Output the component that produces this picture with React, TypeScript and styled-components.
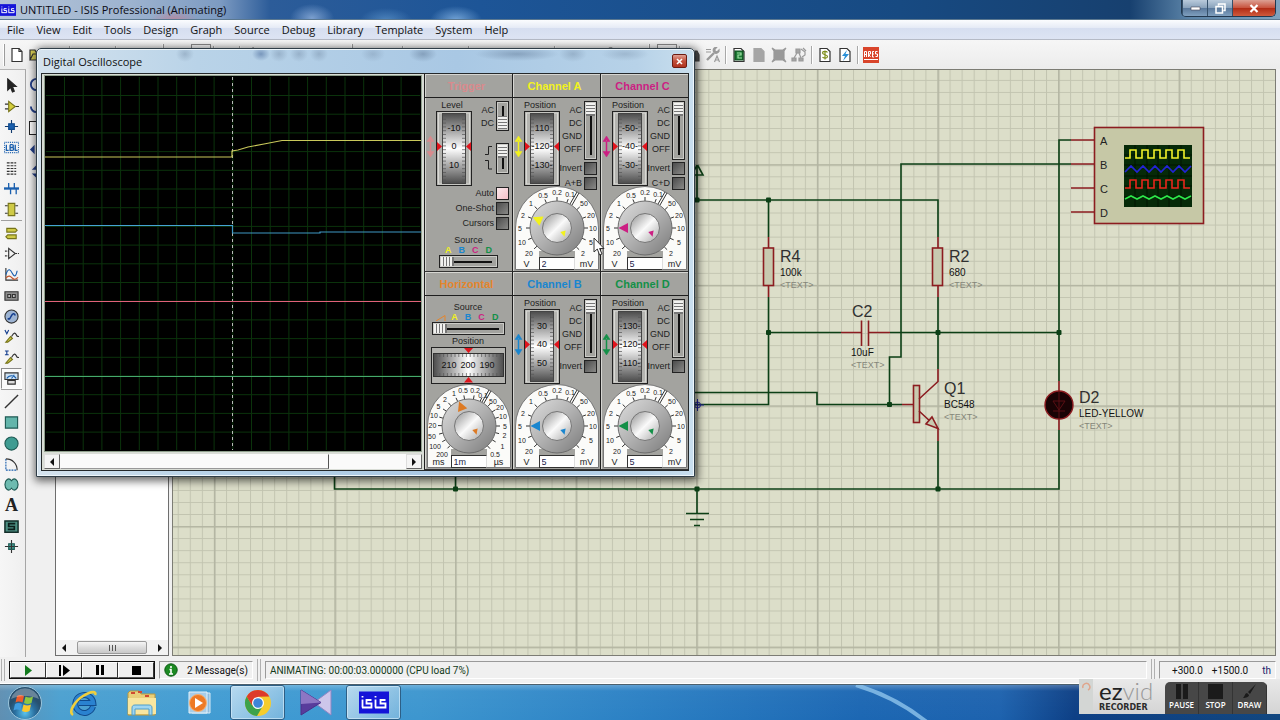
import React from "react";
import styled, { createGlobalStyle } from "styled-components";

const UI = '"Open Sans", "Noto Sans", sans-serif';
const SANS = '"Liberation Sans", Arial, sans-serif';

const GlobalStyle = createGlobalStyle`
  * { box-sizing: border-box; }
  body { margin: 0; background: #f0f0f0; font-family: ${UI}; font-size: 11px; color: #111; }
  button, input { font: inherit; color: inherit; margin: 0; }
  svg { display: block; }
`;

const Desktop = styled.div`
  position: relative;
  display: flex;
  flex-direction: column;
  min-height: 100vh;
  overflow: hidden;
`;

/* ---------- Main window chrome ---------- */
const TitleBar = styled.header`
  display: flex;
  align-items: center;
  gap: 4px;
  height: 20px;
  flex: none;
  color: #0b0b14;
  border-bottom: 1px solid #5b7890;
  background:
    radial-gradient(ellipse 22px 14px at 312px 18px, #8fb0dccc, transparent),
    radial-gradient(ellipse 24px 10px at 174px 20px, #c97a8caa, transparent),
    radial-gradient(ellipse 26px 12px at 386px 20px, #5f97cdaa, transparent),
    radial-gradient(ellipse 26px 14px at 456px 20px, #86b6e6cc, transparent),
    linear-gradient(90deg, #b5c5d8 0, #9db3cf 130px, #7d9bc2 220px, #2c5c99 270px, #1d5597 480px, #174a82 900px, #17406f 1130px, #5c84a8 1190px, #7fa3bf 100%);
`;
const TitleText = styled.h1`
  margin: 0;
  flex: 1;
  font-size: 11px;
  font-weight: 400;
  line-height: 20px;
`;
const WindowButtons = styled.div`
  display: flex;
  align-self: flex-start;
  margin-right: 4px;
  border: 1px solid #22384f;
  border-top: 0;
  border-radius: 0 0 5px 5px;
  overflow: hidden;
`;
const WindowButton = styled.button<{ $close?: boolean }>`
  display: grid;
  place-items: center;
  width: ${(p) => (p.$close ? 43 : 25)}px;
  height: 16px;
  padding: 0;
  border: 0;
  border-left: 1px solid #34506a;
  background: ${(p) =>
    p.$close
      ? "linear-gradient(#dca093, #c8543f 48%, #b02a14 50%, #cf5a3c)"
      : "linear-gradient(#b9cadb, #8aa3bc 48%, #58779a 50%, #7f9fbe)"};
`;
const MenuBar = styled.nav`
  display: flex;
  align-items: center;
  gap: 12px;
  height: 20px;
  flex: none;
  padding: 0 7px;
  background: linear-gradient(#fbfcfe, #e6ebf6 40%, #d6def0 45%, #dde4f3);
  border-bottom: 1px solid #b5bac6;
`;
const MenuItem = styled.button`
  padding: 0;
  border: 0;
  background: none;
  font-size: 11px;
  line-height: 18px;
`;
const ToolBar = styled.div`
  display: flex;
  align-items: center;
  height: 29px;
  flex: none;
  background: linear-gradient(#f6f6f6, #ececec);
`;
const ToolGroup = styled.div<{ $basis?: number }>`
  display: flex;
  align-items: center;
  flex: 0 0 ${(p) => (p.$basis ? p.$basis + "px" : "auto")};
`;
const ToolButton = styled.button<{ $pressed?: boolean }>`
  display: grid;
  place-items: center;
  width: 20px;
  height: 22px;
  padding: 0;
  border: 1px solid ${(p) => (p.$pressed ? "#8a8a8a" : "transparent")};
  background: ${(p) => (p.$pressed ? "#f8f8f8" : "none")};
`;
const Separator = styled.span`
  width: 6px;
  height: 18px;
  background: linear-gradient(90deg, transparent 2px, #a8a8a8 2px, #a8a8a8 3px, #fff 3px, #fff 4px, transparent 4px);
`;
const Grip = styled.span<{ $wide?: boolean }>`
  width: ${(p) => (p.$wide ? 12 : 7)}px;
  height: 22px;
  background: linear-gradient(90deg, transparent 3px, #fff 3px, #fff 4px, #9c9c9c 4px, #9c9c9c 5px, transparent 5px);
`;

/* ---------- Work area ---------- */
const Work = styled.main`
  display: flex;
  flex: 1;
  min-height: 588px;
`;
const ModeBar = styled.div`
  width: 26px;
  flex: none;
  border-right: 1px solid #a6a6a6;
  padding: 5px 3px 0 1px;
  background: linear-gradient(90deg, #f6f6f6, #efefef);
  border-top: 1px solid #b4b4b4;
`;
const ModeList = styled.div`
  display: flex;
  flex-direction: column;
  height: 482px;
`;
const ModeButton = styled.button<{ $active?: boolean }>`
  display: grid;
  place-items: center;
  flex: 1;
  min-height: 0;
  padding: 0;
  border: 1px solid;
  border-color: ${(p) => (p.$active ? "#8c8c8c #fff #fff #8c8c8c" : "transparent")};
  background: ${(p) => (p.$active ? "#fbfbfb" : "none")};
`;
const ModeRule = styled.span`
  height: 3px;
  border-top: 1px solid #a0a0a0;
`;
const RotateBar = styled.div`
  display: flex;
  flex-direction: column;
  gap: 7px;
  align-items: flex-start;
  width: 29px;
  flex: none;
  padding: 8px 3px;
`;
const AngleInput = styled.input`
  width: 24px;
  height: 14px;
  padding: 0 2px;
  border: 1px solid #222;
  font-size: 9px;
`;
const Picker = styled.aside`
  display: flex;
  flex-direction: column;
  justify-content: flex-end;
  width: 114px;
  flex: none;
  margin: 0 3px 1px 0;
  border: 1px solid #6e6e6e;
  background: #fff;
`;
const PickerScroll = styled.div`
  display: flex;
  justify-content: space-between;
  align-items: center;
  height: 15px;
  background: #f2f2f2;
`;
const ScrollArrow = styled.button<{ $raised?: boolean }>`
  display: grid;
  place-items: center;
  width: 16px;
  height: 15px;
  padding: 0;
  border: ${(p) => (p.$raised ? "1px solid" : "0")};
  border-color: #ddd #666 #666 #ddd;
  background: ${(p) => (p.$raised ? "#f4f4f4" : "none")};
`;
const PickerThumb = styled.div`
  display: grid;
  place-items: center;
  flex: 0 0 70px;
  height: 13px;
  border: 1px solid #9a9a9a;
  border-radius: 2px;
  background: linear-gradient(#f5f5f5, #dcdcdc 50%, #c9c9c9);
`;
const Canvas = styled.section`
  flex: 1;
  min-width: 0;
  margin: 0 4px 1px 0;
  border: 1px solid #7c7c74;
  background: #dcdec9;
  overflow: hidden;
  font-family: ${SANS};
`;

/* ---------- Status bar ---------- */
const StatusBar = styled.footer`
  display: flex;
  align-items: center;
  height: 27px;
  flex: none;
  gap: 4px;
  padding: 0 4px 0 1px;
  background: #f0f0f0;
  border-bottom: 1px solid #fff;
  font-family: Roboto, sans-serif;
  font-size: 10px;
`;
const SimControls = styled.div`
  display: flex;
  border: 1px solid #111;
`;
const SimButton = styled.button`
  display: grid;
  place-items: center;
  width: 36px;
  height: 16px;
  padding: 0;
  border: 1px solid;
  border-color: #fff #333 #555 #fff;
  background: #efefef;
`;
const StatusCell = styled.div<{ $grow?: boolean; $width?: number; $color?: string }>`
  display: flex;
  align-items: center;
  gap: 9px;
  flex: ${(p) => (p.$grow ? "1" : "0 0 " + p.$width + "px")};
  height: 18px;
  padding: 0 4px;
  white-space: nowrap;
  color: ${(p) => p.$color ?? "#111"};
  border: 1px solid;
  border-color: #9a9a9a #fff #fff #9a9a9a;
`;
const StatusGrip = styled.span`
  width: 4px;
  height: 22px;
  border: 1px solid #b0b0b0;
  border-width: 0 1px;
`;
const CoordText = styled.span`
  padding-left: 8px;
`;
const UnitText = styled.span`
  margin-left: auto;
  color: #1b1b6a;
`;

/* ---------- Taskbar ---------- */
const TaskBar = styled.nav`
  display: flex;
  align-items: center;
  height: 36px;
  flex: none;
  border-top: 1px solid #4c5f6c;
  background:
    linear-gradient(#ffffff40, #ffffff08 6px, transparent),
    linear-gradient(90deg, #5f8fb2 0, #4ba0d0 60px, #3f9bd3 250px, #3d96cf 420px, #2b80c4 640px, #1c67b3 860px, #1d62ae 1000px, #0d3f85 1075px, #11467f 100%);
`;
const TaskButton = styled.button<{ $active?: boolean; $width?: number }>`
  display: grid;
  place-items: center;
  width: ${(p) => p.$width ?? 55}px;
  height: 35px;
  margin-right: ${(p) => (p.$width ? 6 : 3)}px;
  padding: 0;
  border: 1px solid ${(p) => (p.$active ? "#2d5f86" : "transparent")};
  border-radius: 3px;
  background: ${(p) => (p.$active ? "linear-gradient(135deg, #d3e8f6cc, #8cc0e2aa)" : "none")};
  box-shadow: ${(p) => (p.$active ? "inset 0 0 0 1px #d5ebf9aa" : "none")};
`;

/* ---------- Oscilloscope window ---------- */
const ScopeWindow = styled.section`
  position: absolute;
  left: 36px;
  top: 48px;
  width: 659px;
  padding: 0 5px 5px 4px;
  border: 1px solid #2f3d47;
  border-radius: 5px 5px 0 0;
  background:
    radial-gradient(ellipse 9px 8px at 148px 5px, #6f86a066, transparent),
    radial-gradient(ellipse 9px 7px at 224px 5px, #33558a77, transparent),
    radial-gradient(ellipse 9px 8px at 242px 5px, #6f86a066, transparent),
    radial-gradient(ellipse 9px 8px at 262px 5px, #6f86a066, transparent),
    radial-gradient(ellipse 9px 8px at 282px 5px, #6f86a066, transparent),
    radial-gradient(ellipse 12px 8px at 336px 5px, #6f86a055, transparent),
    radial-gradient(ellipse 14px 8px at 386px 5px, #5a728f77, transparent),
    radial-gradient(ellipse 42px 7px at 480px 5px, #4f668466, transparent),
    radial-gradient(ellipse 14px 8px at 536px 5px, #6f86a066, transparent),
    radial-gradient(ellipse 24px 7px at 588px 5px, #6f86a055, transparent),
    linear-gradient(90deg, #d5e3ee 0, #b9d3e8 160px, #a9c8e4 420px, #b7d2e8 600px, #c9dfee 100%);
  box-shadow: inset 0 0 0 1px #eef6fb, 1px 2px 9px 2px #00000099;
  font-family: ${SANS};
`;
const ScopeTitle = styled.div`
  display: flex;
  justify-content: space-between;
  align-items: center;
  height: 24px;
  padding: 0 2px;
  font-family: ${UI};
`;
const ScopeHeading = styled.h2`
  margin: 0;
  font-size: 11px;
  font-weight: 400;
`;
const ScopeClose = styled.button`
  display: grid;
  place-items: center;
  width: 15px;
  height: 14px;
  padding: 0;
  border: 1px solid #6d1c12;
  border-radius: 2px;
  background: linear-gradient(#e0a194, #c24f3b 50%, #b03421);
`;
const ScopeBody = styled.div`
  display: grid;
  grid-template-columns: 382px 264px;
  border: 1px solid #24282a;
  background: #a3a39f;
`;
const ScreenColumn = styled.div`
  display: flex;
  flex-direction: column;
  padding: 1px 2px;
  gap: 2px;
  background: #d9ddd6;
`;
const ScreenScroll = styled.div`
  display: flex;
  justify-content: space-between;
  height: 15px;
  background: #fafafa;
`;
const ScreenThumb = styled.span`
  flex: 0 0 269px;
  margin-right: auto;
  border: 1px solid;
  border-color: #fafafa #555 #999 #fafafa;
`;
const Panels = styled.div`
  display: grid;
  grid-template-columns: repeat(3, 88px);
  grid-auto-rows: 198px;
`;
const Panel = styled.section`
  border-left: 1px solid #1e1e1e;
  border-bottom: 1px solid #333;
  box-shadow: inset 1px 1px 0 #d6d6d2;
`;
const PanelHeading = styled.h3<{ $color: string }>`
  margin: 0;
  height: 24px;
  padding-right: 4px;
  border-bottom: 1px solid #1e1e1e;
  color: ${(p) => p.$color};
  font-size: 11px;
  font-weight: 700;
  line-height: 24px;
  text-align: center;
`;
const PanelTop = styled.div`
  display: flex;
  height: 88px;
  font-size: 9px;
`;
const GaugeColumn = styled.div`
  width: 46px;
  flex: none;
  padding-top: 1px;
`;
const Caption = styled.div<{ $inset?: boolean }>`
  padding-left: ${(p) => (p.$inset ? 8 : 0)}px;
  color: #222;
  font-size: 9px;
  line-height: 12px;
  text-align: center;
`;
const SwitchColumn = styled.div<{ $gap: number }>`
  display: flex;
  flex-direction: column;
  align-items: flex-end;
  gap: ${(p) => p.$gap}px;
  flex: 1;
  min-width: 0;
  padding: 3px 3px 0 0;
`;
const SwitchRow = styled.label`
  display: flex;
  gap: 2px;
  color: #222;
`;
const SwitchNames = styled.span`
  display: block;
  padding-top: 3px;
  line-height: 13px;
  text-align: right;
`;
const Slider = styled.input<{ $vertical?: boolean; $long: number }>`
  appearance: none;
  flex: none;
  writing-mode: ${(p) => (p.$vertical ? "vertical-lr" : "horizontal-tb")};
  width: ${(p) => (p.$vertical ? 13 : p.$long)}px;
  height: ${(p) => (p.$vertical ? p.$long : 13)}px;
  border: 1px solid #222;
  outline: 1px solid #ccccc8;
  outline-offset: -2px;
  background: linear-gradient(#111, #111) center / ${(p) => (p.$vertical ? "2px calc(100% - 8px)" : "calc(100% - 10px) 2px")} no-repeat #a3a39f;
  &::-webkit-slider-thumb {
    appearance: none;
    width: ${(p) => (p.$vertical ? 11 : 14)}px;
    height: ${(p) => (p.$vertical ? 14 : 11)}px;
    border: 1px solid #777;
    background: repeating-linear-gradient(${(p) => (p.$vertical ? "180deg" : "90deg")}, #f2f2f0 0, #f2f2f0 2px, #777 2px, #777 3px);
  }
`;
const CheckLabel = styled.label`
  display: flex;
  align-items: center;
  justify-content: flex-end;
  gap: 2px;
  color: #222;
  font-size: 9px;
  line-height: 13px;
  white-space: nowrap;
`;
const CheckBox = styled.input`
  appearance: none;
  width: 13px;
  height: 13px;
  border: 1px solid #222;
  background: linear-gradient(135deg, #4c4c4c, #8a8a88);
  &:checked { background: linear-gradient(135deg, #fbe9ec, #f5c0c8); }
`;
const CheckStack = styled.div`
  display: flex;
  flex-direction: column;
  gap: 2px;
`;
const TriggerChecks = styled(CheckStack)`
  padding: 1px 3px 4px 0;
`;
const SourceBlock = styled.div`
  display: flex;
  flex-direction: column;
  align-items: center;
  font-size: 9px;
`;
const SourceLetters = styled.div<{ $width: number }>`
  display: flex;
  width: ${(p) => p.$width}px;
  line-height: 9px;
  font-weight: 700;
`;
const SourceLetter = styled.span<{ $color: string }>`
  flex: 1;
  display: grid;
  justify-items: center;
  align-items: center;
  color: ${(p) => p.$color};
`;
const DialBox = styled.div`
  display: grid;
  justify-content: center;
`;
const DialLayer = styled.div`
  grid-area: 1 / 1;
`;
const Readout = styled.label`
  grid-area: 1 / 1;
  align-self: end;
  display: flex;
  justify-content: center;
  align-items: center;
  height: 13px;
  font-size: 9px;
  color: #222;
`;
const Unit = styled.span`
  width: 24px;
  text-align: center;
`;
const ReadoutInput = styled.input`
  width: 36px;
  height: 13px;
  padding: 0 2px;
  border: 1px solid #333;
  border-right-color: #ddd;
  background: #fff;
  color: #25254a;
  font-size: 9px;
`;
const HorizontalTop = styled.div`
  display: flex;
  flex-direction: column;
  align-items: center;
  height: 88px;
  padding: 5px 1px 0 0;
`;

/* ---------- Floating recorder ---------- */
const Recorder = styled.aside`
  position: absolute;
  right: 0;
  bottom: 6px;
  display: flex;
  align-items: flex-end;
  width: 201px;
  height: 35px;
  padding: 0 13px 0 0;
  border-radius: 5px 0 0 5px;
  background: linear-gradient(#e9e9e9, #d4d4d4);
`;
const RecorderHandle = styled.span`
  align-self: stretch;
  width: 14px;
  padding: 3px 2px;
  background: #d3d6d4;
`;
const Brand = styled.div`
  flex: 1;
  padding-left: 6px;
  font-family: Lato, sans-serif;
  color: #2c2c2c;
`;
const BrandName = styled.div`
  font-size: 24px;
  line-height: 22px;
  color: #999;
  font-weight: 300;
`;
const BrandStrong = styled.span`
  color: #222;
  font-weight: 400;
`;
const BrandSub = styled.div`
  font-family: "DejaVu Sans", sans-serif;
  font-size: 8px;
  font-weight: 700;
  line-height: 12px;
`;
const RecorderButtons = styled.div`
  display: flex;
  height: 32px;
  border-radius: 5px 5px 0 0;
  background: #474747;
  overflow: hidden;
`;
const RecorderButton = styled.button`
  display: flex;
  flex-direction: column;
  align-items: center;
  gap: 0;
  width: 34px;
  padding: 2px 0 0;
  border: 0;
  border-right: 1px solid #343434;
  background: none;
  color: #fff;
  font-size: 8px;
  font-weight: 600;
  line-height: 12px;
`;
const Pointer = styled.svg`
  position: absolute;
  left: 593px;
  top: 237px;
`;

/* ---------- Icons ---------- */
const Svg = ({ s = 16, children }: { s?: number; children: React.ReactNode }) => (
  <svg width={s} height={s} viewBox="0 0 16 16" fill="none" stroke="#333" strokeWidth="1.2" aria-hidden="true">
    {children}
  </svg>
);

const PAGE = "M3 1.5h7l3 3v10H3z";

const toolIcons: Record<string, React.ReactNode> = {
  new: <><path d={PAGE} fill="#fff" /><path d="M10 1.5v3h3" /></>,
  open: <path d="M1 13V3h5l1 2h6v2M1 13l3-6h11l-3 6z" fill="#d8cf55" />,
  save: <path d="M2 2h12v12H2zM5 2v5h6V2M5 14v-4h6v4" />,
  print: <path d="M4 6V2h8v4M2 6h12v6H2zM5 10h6v4H5z" />,
  copy: <path d="M2 2h8v9H2zM6 5h8v9H6z" fill="#eee" />,
  grid: <path d="M2 2h12v12H2zM6 2v12M10 2v12M2 6h12M2 10h12" />,
  cross: <path d="M8 1v14M1 8h14" />,
  move: <path d="M8 1l3 3H5zM8 15l3-3H5zM1 8l3-3v6zM15 8l-3-3v6z" fill="#24408a" />,
  zoom: <path d="M7 2a5 5 0 1 0 .1 0M10.500 10.500L15 15" />,
  undo: <path d="M2 7c3-5 9-5 12 0M2 3v4h4" stroke="#888" />,
  cut: <path d="M4 2l8 12M12 2L4 14" />,
  block: <path d="M2 3h12v4H2zM2 9h12v4H2z" fill="#777" />,
  binoculars: <path d="M2 14V8l2-4h2v3h4V4h2l2 4v6h-4v-4H6v4z" fill="#555" stroke="#444" />,
  wrench: (
    <g stroke="#9a9a9a">
      <path d="M1 2.500h5M1 5h5" />
      <path d="M2 13l7-7" strokeWidth="2.400" />
      <path d="M14 3l-2 2-2-1 0-2 1.500-1.500c-2-.5-4 1.500-3 4s4 2.500 5.500 0z" fill="#9a9a9a" />
      <path d="M9.500 15l2.500-6 2.500 6M10.500 13h3" />
    </g>
  ),
  sheetGreen: (
    <>
      <path d={PAGE} fill="#fff" />
      <path d="M4 4h8v9H4z" fill="#1d7a35" stroke="#0d4d1d" />
      <path d="M6 6h4v2H7v3h4" stroke="#9fe2a5" />
    </>
  ),
  sheetGrey: <path d={PAGE} fill="#a5a5a5" stroke="#a5a5a5" />,
  boxGrey: <path d="M1 1l3 2h8l3-2-2 3v8l2 3-3-2H4l-3 2 2-3V4z" fill="#999" stroke="#999" />,
  treeGrey: (
    <>
      <path d="M5 2h4v4H5zM1 11h4v3H1zM8 11h4v3H8z" fill="#a5a5a5" stroke="#999" />
      <path d="M6 6l-3 5M8 6l2 5M10 2l4 3v3l-3 2M12 1l3 3" stroke="#999" />
    </>
  ),
  bill: (
    <>
      <path d={PAGE} fill="#fff" />
      <path d="M10.500 5.500c-1-1.500-5-1.500-5 .5s5 1.500 5 3.500-4 2-5 .5M8 3.500v9" stroke="#7f8f1c" />
    </>
  ),
  bolt: (
    <>
      <path d={PAGE} fill="#fff" />
      <path d="M10 3L5 9h3l-2 5 6-7H8.500z" fill="#2a90d8" stroke="none" />
    </>
  ),
};

const A = "#1a5fae";
const TEAL = "#3f9c92";

const TextModeGlyph = styled.span`
  font-family: "Liberation Serif", serif;
  font-size: 18px;
  font-weight: 700;
  line-height: 18px;
  color: #222;
`;

const modeIcons: { label: string; icon?: React.ReactNode; glyph?: string; active?: boolean; rule?: boolean }[] = [
  { label: "Selection", icon: <path d="M4 1v12l3-3 2 5 2-1-2-5h4z" fill="#222" stroke="#222" /> },
  { label: "Component", icon: <><path d="M1 5.500h4M1 10.500h4M12 8h4" /><path d="M5 2.500v11L12 8z" fill="#d5cf3c" stroke="#77741a" /></> },
  { label: "Junction", icon: <><path d="M8 1v14M1 8h14" stroke="#123c6e" /><path d="M5 5h6v6H5z" fill={A} stroke="#0f4a8c" /></> },
  { label: "Wire label", icon: <><path d="M.5 2.500h15v11H.5z" strokeDasharray="1 1" stroke={A} /><path d="M2.500 5v6h2.500M6.500 5v6h2.300a1.500 1.500 0 0 0 0-3H6.500M6.500 8h2a1.500 1.500 0 0 0 0-3h-2M12 5v6h2.500" stroke={A} strokeWidth="1.400" /></> },
  { label: "Script", icon: <path d="M3 2h10M3 5h10M3 8h10M3 11h10M3 14h10" strokeDasharray="3 1" /> },
  { label: "Bus", icon: <><path d="M0 8h16" stroke={A} strokeWidth="2.500" /><path d="M5 2v6M11 2v6M7 8v6M13 8v6" stroke={A} strokeWidth="1.400" /></> },
  { label: "Subcircuit", icon: <><path d="M1 4h3M1 12h3M12 4h3M12 12h3" /><path d="M4.500 1.500h7v13h-7z" fill="#cfca46" stroke="#77741a" /></>, rule: true },
  { label: "Terminal", icon: <g fill="#cfca46" stroke="#77741a"><path d="M3 2.500h9l2 2-2 2H3zM13 9.500H4l-2 2 2 2h9z" /></g> },
  { label: "Device pin", icon: <><path d="M1 5.500h4M1 10.500h4M12 8h4" strokeDasharray="2 1" /><path d="M5 2.500v11L12 8z" /></> },
  { label: "Graph", icon: <><path d="M2 1v13h13" /><path d="M2 8c3-8 5-5 7-1s4 3 5-3" stroke={A} /><path d="M2 12c3-4 5-2 7 0s4 1 6-1" stroke="#c4572c" /></> },
  { label: "Tape", icon: <><path d="M1 4h14v9H1z" fill="#8e8e8e" /><path d="M4 7h3v3H4zM9 7h3v3H9z" fill="#eee" /></> },
  { label: "Generator", icon: <><circle cx="8" cy="8" r="7" fill="#9db4d3" /><path d="M4 10c2 2 3-1 4-3s3-3 4 0" stroke="#123c8e" strokeWidth="1.600" /></> },
  { label: "Voltage probe", icon: <><path d="M1 1l2 4 2-4" stroke="#123c8e" /><path d="M2 14l5-6 2 2-5 4z" fill="#cfca46" stroke="#77741a" /><path d="M8 8c3-5 4-4 5-2s1 2 3 2" /></> },
  { label: "Current probe", icon: <><path d="M1 1h4M3 1v4M1 5h4" stroke="#123c8e" /><path d="M2 14l5-6 2 2-5 4z" fill="#cfca46" stroke="#77741a" /><path d="M8 8c3-5 4-4 5-2s1 2 3 2" /></> },
  { label: "Instrument", active: true, rule: true, icon: <><path d="M1 2h14v7H1z" fill="#cfe2f2" /><path d="M3 8c2-4 8-4 10 0M8 8l3-4" stroke={A} /><path d="M4 10h8v4H4z" fill="#ddd" /></> },
  { label: "Line", icon: <path d="M1 15L15 1" strokeWidth="1.500" /> },
  { label: "Box", icon: <path d="M1.500 2h13v12h-13z" fill="#63b5ab" stroke="#1f5a54" /> },
  { label: "Circle", icon: <circle cx="8" cy="8" r="7" fill={TEAL} stroke="#1f5a54" /> },
  { label: "Arc", icon: <><path d="M2 2v12h12" strokeDasharray="2 1" stroke={A} /><path d="M2 2c7 0 12 5 12 12" /></> },
  { label: "Path", icon: <path d="M8 4c3-4 7-1 7 4s-4 8-7 4c-3 4-7 1-7-4s4-8 7-4z" fill="#6dbbb0" stroke="#1f5a54" /> },
  { label: "Text", glyph: "A" },
  { label: "Symbol", icon: <><path d="M1 2h14v12H1z" fill="#4b8d80" stroke="#132d29" strokeWidth="1.600" /><path d="M12 5H5v3h6v3H4" stroke="#0c1f1c" strokeWidth="1.800" /></> },
  { label: "Marker", icon: <><path d="M8 1v14M1 8h14" /><path d="M5 5h6v6H5z" stroke="#1f5a54" fill={TEAL} /><path d="M8 5v6M5 8h6" /></> },
];

const Arrow = ({ right }: { right?: boolean }) => (
  <svg width="6" height="8" aria-hidden="true">
    <path d={right ? "M1 0v8l4-4z" : "M5 0v8L1 4z"} fill="#111" />
  </svg>
);

const IsisLogo = ({ w, h }: { w: number; h: number }) => (
  <svg width={w} height={h} viewBox="0 0 30 22" aria-label="ISIS">
    <path d="M0 0h30v22H0z" fill="#1414d8" />
    <path d="M3.500 8v8M12.500 8.500H7.500v3.500h5v4H3M16.500 8v8M26.500 8.500h-5v3.500h5v4H16M3.500 4.500v1.500M16.500 4.500v1.500" stroke="#fff" strokeWidth="1.800" fill="none" />
  </svg>
);

/* ---------- Schematic ---------- */
const WIRE = "#0c4016";
const PART = "#8c1c20";

const PartText = ({ x, y, name, value }: { x: number; y: number; name: string; value: string }) => (
  <g>
    <text x={x} y={y} fontSize="16" fill="#303030">{name}</text>
    <text x={x} y={y + 14} fontSize="10" fill="#111">{value}</text>
    <text x={x} y={y + 26} fontSize="9" fill="#85867a">&lt;TEXT&gt;</text>
  </g>
);

const square = (y: number) =>
  `M1125 ${y}h5v-8h6v8h6v-8h6v8h6v-8h6v8h6v-8h6v8h6v-8h6v8h6`;
const zigzag = (y: number, a: number) =>
  "M1125 " + y + Array.from({ length: 11 }, (_, i) => `l6 ${i % 2 ? a : -a}`).join("");

const Schematic = () => (
  <svg width="100%" height="100%" role="img" aria-label="Transistor amplifier schematic">
    <defs>
      <pattern id="minor" x="334.500" y="164.300" width="12.060" height="12.060" patternUnits="userSpaceOnUse">
        <path d="M.5 0v13M0 .5h13" stroke="#c2c4b0" />
      </pattern>
      <pattern id="major" x="334.500" y="164.300" width="120.600" height="120.600" patternUnits="userSpaceOnUse">
        <path d="M.8 0v121M0 .8h121" stroke="#b3b5a2" strokeWidth="1.600" />
      </pattern>
    </defs>
    <g transform="translate(-173 -70)">
      <rect x="173" y="70" width="4000" height="3000" fill="url(#minor)" />
      <rect x="173" y="70" width="4000" height="3000" fill="url(#major)" />
      <g fill="none" stroke={WIRE} strokeWidth="1.600">
        <path d="M697 200H938V237M768.500 200V237M768.500 297V404.500H690M690 392.500H817V404.500H902" />
        <path d="M889.500 404.500V357H901V164H1071M1071 140H1059V381M1059 430V489H334.500V470" />
        <path d="M768.500 332.500H841M890 332.500H1059M938 297V369M938 441V489M455.500 470V489" />
        <path d="M697 489V513M686 513.500H709M690 519.500H704M694 525.500H700" />
        <path d="M697 200V165L692 175H703L697.500 165" />
      </g>
      <g fill={WIRE}>
        {[[697, 200], [768.5, 200], [768.5, 332.5], [938, 332.5], [1059, 332.5], [889.5, 404.5], [938, 489], [697, 489], [455.5, 489]].map(([x, y]) => (
          <rect key={x + "-" + y} x={x - 2.5} y={y - 2.5} width="5" height="5" rx="1" />
        ))}
      </g>
      <g fill="none" stroke="#23239a"><circle cx="697.500" cy="405" r="3" /><path d="M697.500 399v12M691 405h13" /></g>
      <g fill="none" stroke={PART} strokeWidth="1.600">
        <path d="M768.500 237V248M768.500 285V297M938 237V248M938 285V297" />
        <rect x="763.500" y="248" width="10" height="37.500" fill="#c8cab0" />
        <rect x="932.500" y="248" width="10" height="37.500" fill="#c8cab0" />
        <path d="M841 332.500H861M869 332.500H890M861.500 320.500V346M868.500 320.500V346" />
        <rect x="913.500" y="385.500" width="6" height="37" fill="#c8cab0" />
        <path d="M902 404.500H913M919 399L938 381.500V369M919 411L938 428.500V441" />
        <path d="M938 428.500L926 424L932 417Z" fill="#c8cab0" />
        <path d="M1059 381V430" />
        <circle cx="1059" cy="405" r="14" fill="#190305" strokeWidth="1.400" />
        <path d="M1059 391V419M1053 401H1065L1059 410ZM1053 411H1065" stroke="#5a0f14" strokeWidth="1" />
        <rect x="1094.500" y="127.500" width="109" height="96" fill="#c6c8a6" />
        <path d="M1071 140H1094M1071 164H1094M1071 188H1094M1071 212H1094" />
      </g>
      <rect x="1124" y="145" width="68" height="62" fill="#062a08" />
      <path d="M1124 155H1192M1124 165H1192M1124 176H1192M1124 186H1192M1124 197H1192M1135 145V207M1147 145V207M1158 145V207M1169 145V207M1181 145V207" stroke="#001500" />
      <g fill="none" strokeWidth="1.600">
        <path d={square(158)} stroke="#f2f22a" />
        <path d={zigzag(172, 6)} stroke="#2323d8" />
        <path d={square(188)} stroke="#e8261c" />
        <path d={zigzag(199, 3)} stroke="#2ee84a" />
      </g>
      <g fontSize="11" fill="#222">
        {["A", "B", "C", "D"].map((l, i) => <text key={l} x="1100" y={145 + i * 24}>{l}</text>)}
      </g>
      <PartText x={780} y={262} name="R4" value="100k" />
      <PartText x={949} y={262} name="R2" value="680" />
      <g>
        <text x="852" y="317" fontSize="16" fill="#303030">C2</text>
        <text x="851" y="356" fontSize="10" fill="#111">10uF</text>
        <text x="851" y="368" fontSize="9" fill="#85867a">&lt;TEXT&gt;</text>
      </g>
      <PartText x={944} y={394} name="Q1" value="BC548" />
      <PartText x={1079} y={403} name="D2" value="LED-YELLOW" />
    </g>
  </svg>
);

/* ---------- Oscilloscope parts ---------- */
const lines = (n: number, f: (i: number) => string) => Array.from({ length: n }, (_, i) => f(i)).join("");

const ScopeScreen = () => (
  <svg width="378" height="377" role="img" aria-label="Oscilloscope traces">
    <rect width="378" height="377" fill="#000" stroke="#8fa08d" strokeWidth="2" />
    <path
      d={lines(19, (i) => `M${20.5 + i * 18.7} 2V375`) + lines(19, (i) => `M2 ${20.5 + i * 18.7}H376`)}
      stroke="#0b330c"
    />
    <path d="M188.500 2V375" stroke="#b9b9b9" strokeDasharray="3 3" />
    <path d="M1 82H188V76L194 75L204 72L220 69L238 65.500H377" stroke="#c9c85a" strokeWidth="1.200" fill="none" />
    <path d="M188.500 150V158H276V157H377" stroke="#3f97c4" strokeWidth="1.200" fill="none" />
    <rect x="1" y="150" width="188" height="1" fill="#45a3d4" />
    <rect x="1" y="226" width="376" height="1" fill="#e0627a" />
    <rect x="1" y="301" width="376" height="1" fill="#45a86c" />
  </svg>
);

const DefsSvg = styled.svg`
  position: absolute;
`;
const GaugeDefs = () => (
  <DefsSvg width="0" height="0" aria-hidden="true">
    <defs>
      <linearGradient id="drumV" x2="0" y2="1">
        <stop stopColor="#4c4c4c" /><stop offset=".5" stopColor="#fff" /><stop offset="1" stopColor="#4c4c4c" />
      </linearGradient>
      <linearGradient id="drumH">
        <stop stopColor="#4c4c4c" /><stop offset=".5" stopColor="#fff" /><stop offset="1" stopColor="#4c4c4c" />
      </linearGradient>
      <linearGradient id="knob" x2="1" y2="1">
        <stop stopColor="#dedede" /><stop offset=".5" stopColor="#b0b0b0" /><stop offset="1" stopColor="#7a7a7a" />
      </linearGradient>
      <linearGradient id="cap" x2="1" y2="1">
        <stop stopColor="#8c8c8c" /><stop offset=".5" stopColor="#fafafa" /><stop offset="1" stopColor="#a4a4a4" />
      </linearGradient>
    </defs>
  </DefsSvg>
);

const Gauge = ({ values, color }: { values: string[]; color: string }) => (
  <svg width="48" height="76" role="img" aria-label={"Position " + values[1]}>
    <rect x="11.500" y=".5" width="35" height="74" fill="#b4b4b0" stroke="#222" />
    <rect x="13.500" y="2" width="31" height="71" fill="none" stroke="#d8d8d4" />
    <rect x="17.500" y="2.500" width="23" height="70" fill="url(#drumV)" stroke="#444" />
    <path d={lines(18, (i) => `M18 ${4.5 + i * 3.8}h3M37 ${4.5 + i * 3.8}h3`)} stroke="#555" strokeWidth=".7" />
    <g fontSize="9" textAnchor="middle" fill="#111">
      {values.map((v, i) => <text key={v} x="29" y={19.5 + i * 18.5}>{v}</text>)}
    </g>
    <path d="M12 31v9l5-4.500zM46 31v9l-5-4.500z" fill="#e0141c" />
    <path d="M5.500 25L2 30.500h7zM5.500 46L2 40.500h7zM5 29h1v13H5z" fill={color} stroke={color} strokeWidth=".5" />
  </svg>
);

type Mark = [string, number, number];
const CHANNEL_MARKS: Mark[] = [
  ["20", 15, 67.5], ["10", 8, 56], ["5", 6, 42], ["2", 9, 29], ["1", 17, 17], ["0.5", 29, 9], ["0.2", 43, 6],
  ["0.1", 56, 8.5], ["50", 70, 17], ["20", 77, 29], ["10", 79, 42], ["5", 77, 56], ["2", 69, 67.5],
];
const TIME_MARKS: Mark[] = [
  ["200", 16, 70], ["100", 9, 62], ["50", 6, 52], ["20", 6.5, 41.5], ["10", 8, 31.5], ["5", 12.5, 22], ["2", 19, 15],
  ["1", 28, 9.5], ["0.5", 37, 6], ["0.2", 49, 6], ["0.1", 57, 11], ["50", 67, 17], ["20", 74, 23], ["10", 77, 32],
  ["5", 79, 42], ["2", 78.5, 51], ["1", 76.5, 62], ["0.5", 69, 70],
];

const Dial = ({ marks, color, turn, cap = color, left, right, value, name }: {
  marks: Mark[]; color: string; cap?: string; turn: number; left: string; right: string; value: string; name: string;
}) => (
  <DialBox>
    <DialLayer>
      <svg width="84" height="84" viewBox="1 0 84 84" role="img" aria-label={name + " dial"}>
        <path d="M1.500 83.500V42a41.500 41.500 0 0 1 83 0V83.500z" fill="#fbfbf9" stroke="#777" />
        <rect x="25" y="65" width="36" height="19" fill="#a3a39f" />
        <path
          d={marks.map(([, x, y]) => {
            const a = Math.atan2(y - 42, x - 43);
            return `M${43 + 27 * Math.cos(a)} ${42 + 27 * Math.sin(a)}L${43 + 31 * Math.cos(a)} ${42 + 31 * Math.sin(a)}`;
          }).join("")}
          stroke="#333"
        />
        <path d="M56 18L63 6M58 19L65 7" stroke="#333" />
        <circle cx="43" cy="42" r="27" fill="url(#knob)" stroke="#6c6c6c" />
        <circle cx="43" cy="42" r="14.500" fill="url(#cap)" stroke="#777" />
        <path d="M16.500 42l9.500-5v10z" fill={color} transform={`rotate(${turn} 43 42)`} />
        <path d="M46 46.500l5-2.500v6.500z" fill={cap} transform="rotate(10 49 48)" />
        <g fontSize="7" textAnchor="middle" fill="#222">
          {marks.map(([t, x, y], i) => <text key={i} x={x} y={y + 2.5}>{t}</text>)}
        </g>
      </svg>
    </DialLayer>
    <Readout>
      <Unit>{left}</Unit>
      <ReadoutInput defaultValue={value} aria-label={name} />
      <Unit>{right}</Unit>
    </Readout>
  </DialBox>
);

const Check = ({ label, checked }: { label: string; checked?: boolean }) => (
  <CheckLabel>{label}<CheckBox type="checkbox" defaultChecked={checked} /></CheckLabel>
);

const Channel = ({ id, color, values, sum, turn, value }: {
  id: string; color: string; values: string[]; sum?: string; turn: number; value: string;
}) => (
  <Panel>
    <PanelHeading $color={color}>Channel {id}</PanelHeading>
    <PanelTop>
      <GaugeColumn>
        <Caption $inset>Position</Caption>
        <Gauge values={values} color={color} />
      </GaugeColumn>
      <SwitchColumn $gap={2}>
        <SwitchRow>
          <SwitchNames>AC<br />DC<br />GND<br />OFF</SwitchNames>
          <Slider type="range" $vertical $long={59} min={0} max={3} defaultValue={0} />
        </SwitchRow>
        <CheckStack>
          <Check label="Invert" />
          {sum && <Check label={sum} />}
        </CheckStack>
      </SwitchColumn>
    </PanelTop>
    <Dial marks={CHANNEL_MARKS} color={color} turn={turn} left="V" right="mV" value={value} name={"Channel " + id + " scale"} />
  </Panel>
);

const YELLOW = "#f2f21c";
const BLUE = "#1a86cf";
const MAGENTA = "#cc1f83";
const GREEN = "#149048";
const LETTERS: [string, string][] = [["A", YELLOW], ["B", BLUE], ["C", MAGENTA], ["D", GREEN]];

const Trigger = () => (
  <Panel>
    <PanelHeading $color="#d98a8d">Trigger</PanelHeading>
    <PanelTop>
      <GaugeColumn>
        <Caption $inset>Level</Caption>
        <Gauge values={["-10", "0", "10"]} color="#d98a8d" />
      </GaugeColumn>
      <SwitchColumn $gap={12}>
        <SwitchRow>
          <SwitchNames>AC<br />DC</SwitchNames>
          <Slider type="range" $vertical $long={30} min={0} max={1} defaultValue={1} />
        </SwitchRow>
        <SwitchRow>
          <svg width="11" height="30" fill="none" stroke="#222" aria-label="Edge">
            <path d="M2 11.500h3.500V3.500H9M2 17.500h3.500V26H9" />
          </svg>
          <Slider type="range" $vertical $long={31} min={0} max={1} defaultValue={0} />
        </SwitchRow>
      </SwitchColumn>
    </PanelTop>
    <TriggerChecks>
      <Check label="Auto" checked />
      <Check label="One-Shot" />
      <Check label="Cursors" />
    </TriggerChecks>
    <SourceBlock>
      <Caption>Source</Caption>
      <SourceLetters $width={54}>
        {LETTERS.map(([l, c]) => <SourceLetter key={l} $color={c}>{l}</SourceLetter>)}
      </SourceLetters>
      <Slider type="range" $long={59} min={0} max={3} defaultValue={0} aria-label="Trigger source" />
    </SourceBlock>
  </Panel>
);

const Horizontal = () => (
  <Panel>
    <PanelHeading $color="#e5852c">Horizontal</PanelHeading>
    <HorizontalTop>
      <SourceBlock>
        <Caption>Source</Caption>
        <SourceLetters $width={68}>
          <SourceLetter $color="#e5852c">
            <svg width="10" height="6" aria-label="Sawtooth"><path d="M0 6L9 .5V6" fill="none" stroke="#e5852c" /></svg>
          </SourceLetter>
          {LETTERS.map(([l, c]) => <SourceLetter key={l} $color={c}>{l}</SourceLetter>)}
        </SourceLetters>
        <Slider type="range" $long={73} min={0} max={4} defaultValue={0} aria-label="Horizontal source" />
      </SourceBlock>
      <Caption>Position</Caption>
      <svg width="75" height="37" role="img" aria-label="Horizontal position 200">
        <rect x=".5" y=".5" width="74" height="36" fill="#b4b4b0" stroke="#222" />
        <rect x="2.500" y="6.500" width="70" height="23" fill="url(#drumH)" stroke="#333" />
        <path d={lines(18, (i) => `M${5 + i * 3.8} 7v3M${5 + i * 3.8} 26v3`)} stroke="#555" strokeWidth=".7" />
        <g fontSize="9" textAnchor="middle" fill="#111">
          <text x="18" y="21">210</text><text x="37" y="21">200</text><text x="56" y="21">190</text>
        </g>
        <path d="M33 1h9l-4.500 5zM33 35.500h9L37.500 30z" fill="#e0141c" />
      </svg>
    </HorizontalTop>
    <Dial marks={TIME_MARKS} color="#dd7a24" turn={68} left="ms" right="µs" value="1m" name="Time base" />
  </Panel>
);

const Oscilloscope = () => (
  <ScopeWindow aria-label="Digital Oscilloscope">
    <GaugeDefs />
    <ScopeTitle>
      <ScopeHeading>Digital Oscilloscope</ScopeHeading>
      <ScopeClose aria-label="Close oscilloscope">
        <svg width="7" height="7"><path d="M1 1l5 5M6 1L1 6" stroke="#fff" strokeWidth="1.600" /></svg>
      </ScopeClose>
    </ScopeTitle>
    <ScopeBody>
      <ScreenColumn>
        <ScopeScreen />
        <ScreenScroll>
          <ScrollArrow $raised aria-label="Scroll left"><Arrow /></ScrollArrow>
          <ScreenThumb />
          <ScrollArrow $raised aria-label="Scroll right"><Arrow right /></ScrollArrow>
        </ScreenScroll>
      </ScreenColumn>
      <Panels>
        <Trigger />
        <Channel id="A" color={YELLOW} values={["110", "-120-", "-130-"]} sum="A+B" turn={24} value="2" />
        <Channel id="C" color={MAGENTA} values={["-50-", "-40-", "-30-"]} sum="C+D" turn={0} value="5" />
        <Horizontal />
        <Channel id="B" color={BLUE} values={["30", "40", "50"]} turn={0} value="5" />
        <Channel id="D" color={GREEN} values={["-130-", "-120-", "-110-"]} turn={0} value="5" />
      </Panels>
    </ScopeBody>
  </ScopeWindow>
);

/* ---------- Toolbar data ---------- */
const renderTools = (spec: string) =>
  spec.split(" ").map((t, i) => {
    if (t === "|") return <Separator key={i} />;
    if (t === "#") return <Grip key={i} />;
    if (t === "##") return <Grip key={i} $wide />;
    const pressed = t.endsWith("!");
    const id = t.replace("!", "");
    return (
      <ToolButton key={i} $pressed={pressed} aria-label={id}>
        <Svg>{toolIcons[id]}</Svg>
      </ToolButton>
    );
  });

/* ---------- Taskbar icons ---------- */
const StartOrb = () => (
  <svg width="36" height="34" viewBox="0 0 36 34" aria-hidden="true">
    <defs>
      <radialGradient id="orb" cy=".8"><stop stopColor="#59c3ee" /><stop offset=".6" stopColor="#2a6f9f" /><stop offset="1" stopColor="#27506f" /></radialGradient>
    </defs>
    <circle cx="18" cy="17" r="16.500" fill="url(#orb)" stroke="#9cc6dd" />
    <path d="M10 10c2-1.500 4.500-1.500 7 0l-1.500 6.500c-2.500-1.500-5-1.500-7 0z" fill="#ee5b2b" />
    <path d="M18.500 10.500c2.500 1.300 5 1.300 7.500 0L24.500 17c-2.500 1.300-5 1.300-7.500 0z" fill="#8fc742" />
    <path d="M8 18c2-1.500 4.500-1.500 7 0l-1.500 6.500c-2.500-1.500-5-1.500-7 0z" fill="#3f9ce0" />
    <path d="M16.500 18.500c2.500 1.300 5 1.300 7.500 0L22.500 25c-2.500 1.300-5 1.300-7.500 0z" fill="#fbc72c" />
    <path d="M4 13a14.500 14.500 0 0 1 28 0c-8-4-20-4-28 0z" fill="#fff" opacity=".3" />
  </svg>
);
const Explorer = () => (
  <svg width="30" height="28" viewBox="0 0 30 28" fill="none" aria-hidden="true">
    <path d="M24 17.500a9 9 0 1 1 .3-3.500H10" stroke="#114b8c" strokeWidth="6" />
    <path d="M24 17.500a9 9 0 1 1 .3-3.500H10" stroke="#2a82d0" strokeWidth="4" />
    <path d="M4 26c-5-3 2-14 10-19s14-5 12-1" stroke="#f0cf3e" strokeWidth="2.600" />
  </svg>
);
const Folder = () => (
  <svg width="32" height="28" viewBox="0 0 32 28" aria-hidden="true">
    <path d="M2 26V4l2-2h9l2 3h14v21z" fill="#e8cf7a" stroke="#b8983e" />
    <path d="M5 4h4M19 7h4M12 3h4" stroke="#d04a32" strokeWidth="2" />
    <path d="M2 9h28v16H2z" fill="#f8e6a0" />
    <path d="M6 26v-7c0-2 1-3 3-3h14c2 0 3 1 3 3v7h-3v-6H9v6z" fill="#9fd6f2" stroke="#4f9ecb" />
  </svg>
);
const Media = () => (
  <svg width="26" height="24" viewBox="0 0 26 24" aria-hidden="true">
    <path d="M5 2h18v20H5z" fill="#8ebbdc" stroke="#d7ebf7" /><path d="M2 1h18v21H2z" fill="#a8cde8" stroke="#e4f2fa" />
    <circle cx="11" cy="12" r="8.500" fill="#ee7a25" stroke="#f8b070" /><path d="M8 7v10l8-5z" fill="#fff" />
  </svg>
);
const Chrome = () => (
  <svg width="28" height="28" viewBox="0 0 28 28" aria-hidden="true">
    <circle cx="14" cy="14" r="13" fill="#f6cc2c" />
    <path d="M14 14L2.700 7.500A13 13 0 0 1 25.300 7.500H14z" fill="#dd3a2a" />
    <path d="M2.700 7.500A13 13 0 0 0 13 27l5.500-9.500L14 14 8 16z" fill="#3da24a" />
    <path d="M14 8L25.300 7.500H14zM2.700 7.500L8.500 17 10 10z" fill="#dd3a2a" />
    <circle cx="14" cy="14" r="6" fill="#fff" /><circle cx="14" cy="14" r="4.800" fill="#3f85d8" />
  </svg>
);
const KmPlayer = () => (
  <svg width="32" height="28" viewBox="0 0 32 28" aria-hidden="true">
    <path d="M31 1v25L14 13.500z" fill="#cdc6ea" stroke="#9186c4" /><path d="M1 1v25l20-12.500z" fill="#583c9c" stroke="#4a2f88" />
    <path d="M1 1l20 12.500L1 15z" fill="#8d76c4" />
  </svg>
);

const MENUS = ["File", "View", "Edit", "Tools", "Design", "Graph", "Source", "Debug", "Library", "Template", "System", "Help"];

export default function App() {
  return (
    <Desktop>
      <GlobalStyle />
      <TitleBar>
        <IsisLogo w={16} h={12} />
        <TitleText>UNTITLED - ISIS Professional (Animating)</TitleText>
        <WindowButtons>
          <WindowButton aria-label="Minimize"><svg width="11" height="5"><path d="M1 1h9v3H1z" fill="#fff" stroke="#445" strokeWidth=".6" /></svg></WindowButton>
          <WindowButton aria-label="Restore"><svg width="11" height="11" fill="none" stroke="#fff" strokeWidth="1.500"><path d="M3.500 2.500V1h6.500v6.500H8.500M1 3.500h6.500V10H1z" /></svg></WindowButton>
          <WindowButton $close aria-label="Close"><svg width="10" height="9"><path d="M1.500 1l7 7M8.500 1l-7 7" stroke="#fff" strokeWidth="2.200" /></svg></WindowButton>
        </WindowButtons>
      </TitleBar>
      <MenuBar>{MENUS.map((m) => <MenuItem key={m}>{m}</MenuItem>)}</MenuBar>
      <ToolBar>
        <ToolGroup $basis={348}>{renderTools("# new open save | print copy | grid copy ## copy grid! | cross | move zoom zoom zoom zoom")}</ToolGroup>
        <ToolGroup $basis={297}>{renderTools("## undo undo | cut copy print | block copy block block | zoom cross wrench cut")}</ToolGroup>
        <ToolGroup>{renderTools("## sheetGreen! | binoculars wrench | sheetGreen sheetGrey boxGrey treeGrey | bill bolt |")}
          <ToolButton aria-label="ARES">
            <svg width="16" height="16" fill="none"><path d="M0 0h16v16H0z" fill="#d9452b" /><path d="M1.500 10V4.500h2V10M1.500 7.500h2M5.500 10V4.500h2V7h-2l2 3M11 4.500H9.500V10H11M9.500 7H11M14.500 4.500h-2V7h2v2.500h-2M1 12.500h14" stroke="#fff" /></svg>
          </ToolButton>
        </ToolGroup>
      </ToolBar>
      <Work>
        <ModeBar>
          <ModeList>
            {modeIcons.map((m) => (
              <React.Fragment key={m.label}>
                <ModeButton $active={m.active} aria-label={m.label}>
                  {m.glyph ? <TextModeGlyph>{m.glyph}</TextModeGlyph> : <Svg s={15}>{m.icon}</Svg>}
                </ModeButton>
                {m.rule && <ModeRule />}
              </React.Fragment>
            ))}
          </ModeList>
        </ModeBar>
        <RotateBar>
          <Svg s={15}><path d="M14 8A6 6 0 1 1 8 2" stroke="#24408a" strokeWidth="2" /></Svg>
          <Svg s={15}><path d="M2 8a6 6 0 1 0 6-6" stroke="#24408a" strokeWidth="2" /></Svg>
          <AngleInput aria-label="Rotation angle" />
          <Svg s={15}><path d="M1 8l5-5v10zM15 8l-5-5v10z" fill="#24408a" stroke="none" /></Svg>
          <Svg s={15}><path d="M8 1l5 5H3zM8 15l5-5H3z" fill="#24408a" stroke="none" /></Svg>
        </RotateBar>
        <Picker aria-label="Instruments">
          <PickerScroll>
            <ScrollArrow aria-label="Scroll left"><Arrow /></ScrollArrow>
            <PickerThumb><svg width="8" height="6"><path d="M1.500 0v6M4.500 0v6M7.500 0v6" stroke="#555" /></svg></PickerThumb>
            <ScrollArrow aria-label="Scroll right"><Arrow right /></ScrollArrow>
          </PickerScroll>
        </Picker>
        <Canvas><Schematic /></Canvas>
      </Work>
      <StatusBar>
        <StatusGrip />
        <SimControls>
          <SimButton aria-label="Play"><svg width="9" height="11"><path d="M1 0v11l7-5.500z" fill="#137a1d" /></svg></SimButton>
          <SimButton aria-label="Step"><svg width="12" height="11"><path d="M1 0h2v11H1zM5 0v11l7-5.500z" /></svg></SimButton>
          <SimButton aria-label="Pause"><svg width="8" height="10"><path d="M0 0h3v10H0zM5 0h3v10H5z" /></svg></SimButton>
          <SimButton aria-label="Stop"><svg width="9" height="9"><path d="M0 0h9v9H0z" /></svg></SimButton>
        </SimControls>
        <StatusCell $width={92}>
          <svg width="14" height="14"><circle cx="7" cy="7" r="6.200" fill="#1c8a22" stroke="#0c5a14" /><path d="M7 3v2M5.500 6.500H7V11M5 11h4" stroke="#fff" strokeWidth="1.600" fill="none" /></svg>
          2 Message(s)
        </StatusCell>
        <StatusGrip />
        <StatusCell $grow $color="#123a18">ANIMATING: 00:00:03.000000 (CPU load 7%)</StatusCell>
        <StatusGrip />
        <StatusCell $width={117}>
          <CoordText>+300.0</CoordText>
          <span>+1500.0</span>
          <UnitText>th</UnitText>
        </StatusCell>
      </StatusBar>
      <TaskBar>
        <TaskButton $width={50} aria-label="Start"><StartOrb /></TaskButton>
        <TaskButton aria-label="Internet Explorer"><Explorer /></TaskButton>
        <TaskButton aria-label="Windows Explorer"><Folder /></TaskButton>
        <TaskButton aria-label="Media Player"><Media /></TaskButton>
        <TaskButton $active aria-label="Chrome"><Chrome /></TaskButton>
        <TaskButton aria-label="KMPlayer"><KmPlayer /></TaskButton>
        <TaskButton $active aria-label="ISIS"><IsisLogo w={30} h={23} /></TaskButton>
        <svg width="560" height="35" aria-hidden="true"><path d="M452 0q40 12 72 38" fill="none" stroke="#8fc4ec" strokeWidth="4" opacity=".8" /></svg>
      </TaskBar>
      <Oscilloscope />
      <Recorder aria-label="ezvid recorder">
        <RecorderHandle><svg width="10" height="12" fill="none" stroke="#e0a58c" strokeWidth="1.500"><path d="M2 6a3.500 3.500 0 1 1 5 2" /></svg></RecorderHandle>
        <Brand>
          <BrandName><BrandStrong>ez</BrandStrong>vid</BrandName>
          <BrandSub>RECORDER</BrandSub>
        </Brand>
        <RecorderButtons>
          <RecorderButton><svg width="14" height="15"><path d="M1 0h5v15H1zM8 0h5v15H8z" fill="#1b1b1b" /></svg>PAUSE</RecorderButton>
          <RecorderButton><svg width="15" height="15"><path d="M0 0h15v15H0z" fill="#1b1b1b" /></svg>STOP</RecorderButton>
          <RecorderButton><svg width="15" height="15"><path d="M14 0L6 8l2 2zM5 9c-2 0-2 3-4 5 3 0 6-1 6-3z" fill="#1b1b1b" /></svg>DRAW</RecorderButton>
        </RecorderButtons>
      </Recorder>
      <Pointer width="13" height="20" aria-hidden="true">
        <path d="M1 1v14l3.300-3 2.300 6 2.400-1-2.400-5.500H11z" fill="#fff" stroke="#333" />
      </Pointer>
    </Desktop>
  );
}
